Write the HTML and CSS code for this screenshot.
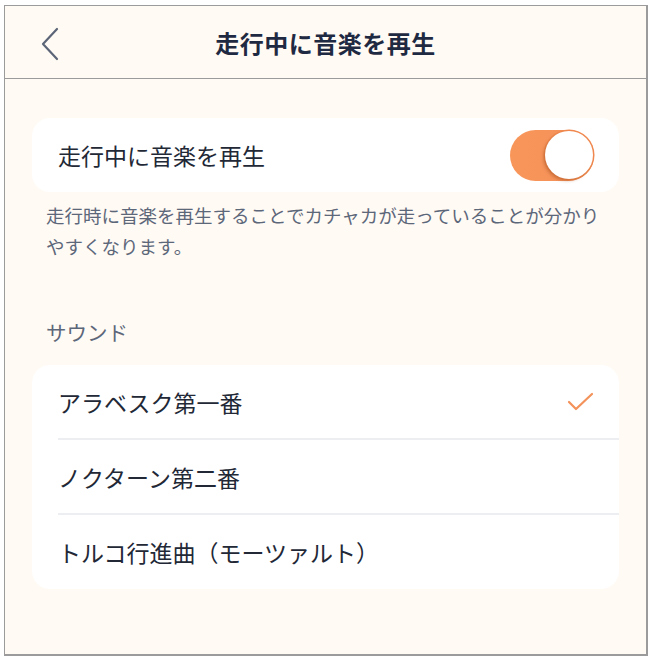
FILE: index.html
```html
<!DOCTYPE html>
<html lang="ja">
<head>
<meta charset="utf-8">
<link rel="stylesheet" href="styles.css">
</head>
<body>
<div class="frame">
  <header class="header">
    <span class="back">
      <svg width="20" height="34" viewBox="0 0 20 34"><path d="M17 2 L3 17 L17 32" fill="none" stroke="#5b6577" stroke-width="2.2" stroke-linecap="round" stroke-linejoin="round"/></svg>
    </span>
    <h1 class="title">走行中に音楽を再生</h1>
  </header>
  <main class="content">
    <div class="card toggle-card">
      <span class="row-label">走行中に音楽を再生</span>
      <span class="switch"><span class="knob"></span></span>
    </div>
    <p class="desc">走行時に音楽を再生することでカチャカが走っていることが分かりやすくなります。</p>
    <div class="section-label">サウンド</div>
    <div class="card list">
      <div class="item"><span class="row-label">アラベスク第一番</span>
        <svg class="check" width="28" height="20" viewBox="0 0 28 20"><path d="M2 10 L9 17 L25 2" fill="none" stroke="#f3925a" stroke-width="2.2" stroke-linecap="round" stroke-linejoin="round"/></svg>
      </div>
      <div class="item"><span class="row-label">ノクターン第二番</span></div>
      <div class="item last"><span class="row-label">トルコ行進曲（モーツァルト）</span></div>
    </div>
  </main>
</div>
</body>
</html>
```
FILE: styles.css
```css
* { box-sizing: border-box; }
html, body { margin: 0; padding: 0; background: #ffffff; }
body { font-family: "Noto Sans CJK JP", "Noto Sans", sans-serif; }
.frame {
  margin: 5px 0 0 4px;
  width: 644px;
  height: 651px;
  border: 1px solid #9b9b9b;
  border-right-width: 2px;
  border-bottom-width: 2px;
  background: #fffaf4;
}
.header {
  position: relative;
  height: 73px;
  border-bottom: 1px solid #9b9b9b;
  display: flex;
  align-items: center;
  justify-content: center;
}
.back {
  position: absolute;
  left: 35px;
  top: 21px;
  display: flex;
}
.title {
  margin: 0;
  font-size: 24px;
  font-weight: 700;
  color: #1f2a42;
  letter-spacing: 0.5px;
}
.content {
  padding: 39px 27px 0 27px;
}
.card {
  background: #ffffff;
  border-radius: 18px;
}
.toggle-card {
  height: 74px;
  display: flex;
  align-items: center;
  justify-content: space-between;
  padding: 0 25px 0 26px;
}
.row-label {
  font-size: 23px;
  color: #222836;
}
.switch {
  width: 84px;
  height: 51px;
  border-radius: 26px;
  background: linear-gradient(90deg, #f8965a 0%, #f6935a 50%, #e9884f 100%);
  display: flex;
  align-items: center;
  justify-content: flex-end;
  padding: 1px;
}
.knob {
  width: 48px;
  height: 48px;
  border-radius: 50%;
  background: #ffffff;
  box-shadow: -2px 2px 3px rgba(150, 70, 20, 0.35), 0 0 0 1.5px #f0894f;
}
.desc {
  margin: 8px 0 0 14px;
  font-size: 18.5px;
  line-height: 31px;
  color: #5d677a;
  width: 570px;
}
.section-label {
  margin: 54px 0 0 14px;
  font-size: 20.5px;
  line-height: 32px;
  color: #5d677a;
}
.list {
  margin-top: 17px;
  padding-left: 26px;
}
.item {
  height: 75px;
  display: flex;
  align-items: center;
  justify-content: space-between;
  padding-right: 24px;
  border-bottom: 2px solid #eceef2;
}
.item.last { border-bottom: none; height: 74px; }
.check { display: block; }
```
